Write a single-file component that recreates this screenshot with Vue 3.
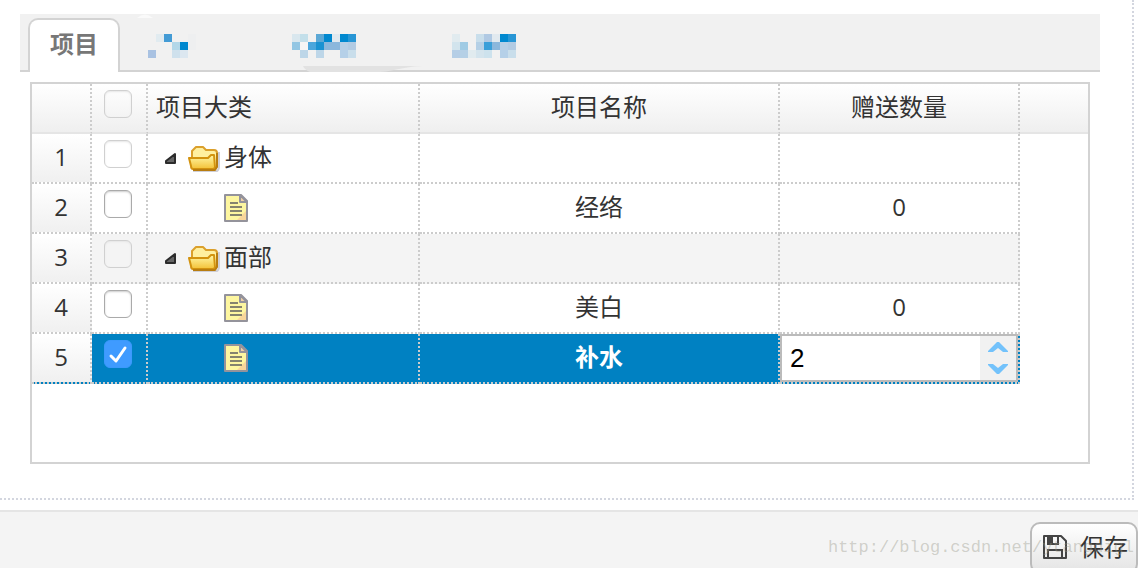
<script setup>
import { ref } from 'vue'

const rows = ref([
  { id: 1, group: '身体', checked: false },
  { id: 2, name: '经络', count: 0, checked: false },
  { id: 3, group: '面部', checked: false, shaded: true },
  { id: 4, name: '美白', count: 0, checked: false },
  { id: 5, name: '补水', count: 2, checked: true, editing: true },
])

// Each mosaic is a list of [column, row, colour] on an 8px grid.
const mosaics = [
  { id: 'a', cols: 6, label: '标签二', cells: [
    [1, 0, '#e1ebf0'], [2, 0, '#439bd5'], [5, 0, '#eeeff0'], [3, 1, '#b3d7e8'], [4, 1, '#0088cf'],
    [5, 1, '#eeeff0'], [0, 2, '#a9c2e2'], [3, 2, '#cfe1ed'], [4, 2, '#dce7f0'],
  ] },
  { id: 'b', cols: 8, label: '标签三', cells: [
    [0, 0, '#d9e7ee'], [1, 0, '#c3dfea'], [3, 0, '#5ca8d5'], [4, 0, '#0088cf'], [5, 0, '#e1e9ef'], [6, 0, '#0088cf'], [7, 0, '#2896d5'],
    [0, 1, '#93c6e3'], [1, 1, '#f5f5f5'], [2, 1, '#4ba6dc'], [3, 1, '#1a92d2'], [4, 1, '#8bb7dc'], [5, 1, '#8bb7dc'], [6, 1, '#b7cfe6'], [7, 1, '#b2cbe3'],
    [1, 2, '#bdd6e8'], [3, 2, '#bdd6e8'], [6, 2, '#b5d0e8'], [7, 2, '#c9deeb'],
  ] },
  { id: 'c', cols: 8, label: '标签四', cells: [
    [0, 0, '#e1ebef'], [3, 0, '#c9deeb'], [4, 0, '#b0c9e3'], [5, 0, '#e1e9ef'], [6, 0, '#0088cf'], [7, 0, '#2896d5'],
    [0, 1, '#d2e4ed'], [1, 1, '#a0cbe4'], [3, 1, '#b5d0e6'], [4, 1, '#3a9fd9'], [5, 1, '#8bb7dc'], [6, 1, '#b7cfe6'], [7, 1, '#b2cbe3'],
    [0, 2, '#b5cee6'], [1, 2, '#b5d0e6'], [2, 2, '#e1ebef'], [3, 2, '#d4e4ed'], [4, 2, '#cde2ed'], [6, 2, '#b5d0e8'], [7, 2, '#c9deeb'],
  ] },
]

function step(row, amount) {
  row.count = Math.max(0, Number(row.count) + amount)
}
</script>

<template>
  <div class="page">
    <main class="panel">
      <nav class="tabs">
        <button class="tab active" type="button">项目</button>
        <button v-for="m in mosaics" :key="m.id" class="tab" :class="'tab-' + m.id" type="button" :aria-label="m.label">
          <svg :width="m.cols * 8" height="24" shape-rendering="crispEdges" aria-hidden="true">
            <rect v-for="(c, i) in m.cells" :key="i" :x="c[0] * 8" :y="c[1] * 8" width="8" height="8" :fill="c[2]" />
          </svg>
        </button>
        <svg class="glint" width="16" height="4" aria-hidden="true">
          <path d="M0 4Q8 -3 16 4Z" fill="#fafafa" />
        </svg>
        <svg class="smudge" width="124" height="6" aria-hidden="true">
          <path d="M0 0H124C98 0 92 6 74 6H7Q2 4 0 0Z" fill="#e2e2e2" />
        </svg>
      </nav>

      <div class="grid">
        <table>
          <colgroup>
            <col class="c-num"><col class="c-check"><col class="c-tree"><col class="c-name"><col class="c-count"><col>
          </colgroup>
          <thead>
            <tr>
              <th></th>
              <th class="check"><input type="checkbox" disabled aria-label="全选"></th>
              <th class="left">项目大类</th>
              <th>项目名称</th>
              <th>赠送数量</th>
              <th class="rest"></th>
            </tr>
          </thead>
          <tbody>
            <tr v-for="row in rows" :key="row.id" :class="{ shaded: row.shaded, selected: row.editing }">
              <td class="num">{{ row.id }}</td>
              <td class="check">
                <label class="box">
                  <input v-model="row.checked" type="checkbox" :disabled="!!row.group" :aria-label="'选择第' + row.id + '行'">
                  <svg v-if="row.checked" class="tick" viewBox="0 0 28 28" aria-hidden="true">
                    <path d="M7 16L12 21L21 8" fill="none" stroke="#fff" stroke-width="3" stroke-linecap="round" stroke-linejoin="round" />
                  </svg>
                </label>
              </td>
              <td>
                <div v-if="row.group" class="node">
                  <svg class="arrow" width="14" height="14" viewBox="0 0 14 14" aria-hidden="true">
                    <path d="M11 3V12H2V10Z" fill="#666" stroke="#2c2c2c" stroke-width="2" stroke-linejoin="round" />
                  </svg>
                  <svg width="32" height="28" viewBox="0 0 32 28" aria-hidden="true">
                    <defs>
                      <linearGradient id="folder" x1="0" y1="0" x2="0" y2="1">
                        <stop offset="0" stop-color="#fff8a8" />
                        <stop offset="1" stop-color="#f3c136" />
                      </linearGradient>
                    </defs>
                    <path d="M5 27H29Q31 26 31 22V8" fill="none" stroke="#cfcfd6" stroke-width="2" />
                    <path d="M4 23V7L8 3H15L18 6H26Q29 6 29 9V22L27 25H6Z" fill="#fff0a0" stroke="#dba02c" stroke-width="2" stroke-linejoin="round" />
                    <path d="M1 14H20L23 11H26L27 23L26 25H5Q3 25 3 22Z" fill="url(#folder)" stroke="#d3930f" stroke-width="2" stroke-linejoin="round" />
                    <path d="M5 26H27L29 23V9" fill="none" stroke="#b87d10" stroke-width="2" stroke-linejoin="round" />
                  </svg>
                  <span>{{ row.group }}</span>
                </div>
                <div v-else class="node leaf">
                  <svg width="26" height="30" viewBox="0 0 26 30" aria-hidden="true">
                    <path d="M2 2H18L24 8V28H2Z" fill="#fdf6a0" stroke="#94939b" stroke-width="2" stroke-linejoin="round" />
                    <path d="M23 18V27H14Z" fill="#f8d69a" />
                    <path d="M17 2V9H24Z" fill="#eed0a8" stroke="#94939b" stroke-width="2" stroke-linejoin="round" />
                    <path d="M7 10H15M7 14H19M7 18H19M7 22H19" stroke="#85836f" stroke-width="2" />
                  </svg>
                </div>
              </td>
              <td class="center">{{ row.name }}</td>
              <td v-if="row.editing" class="editor">
                <div class="spinner">
                  <input v-model="row.count" type="text" inputmode="numeric" aria-label="赠送数量">
                  <div class="steps">
                    <button type="button" aria-label="增加" @click="step(row, 1)">
                      <svg width="22" height="12" viewBox="0 0 22 12" aria-hidden="true"><path d="M1 11V10L10 1H12L21 10V11H16L11 7L6 11Z" fill="#73c2fb" /></svg>
                    </button>
                    <button type="button" aria-label="减少" @click="step(row, -1)">
                      <svg width="22" height="12" viewBox="0 0 22 12" aria-hidden="true"><path d="M1 1V2L10 11H12L21 2V1H16L11 5L6 1Z" fill="#73c2fb" /></svg>
                    </button>
                  </div>
                </div>
              </td>
              <td v-else class="center digit">{{ row.count }}</td>
            </tr>
          </tbody>
        </table>
      </div>
    </main>

    <footer class="footer">
      <button class="save" type="button">
        <svg width="26" height="26" viewBox="0 0 26 26" aria-hidden="true">
          <path d="M2 2H19L24 7V24H2Z" fill="none" stroke="#444" stroke-width="2" stroke-linejoin="round" />
          <path d="M6 2V10H16V2" fill="none" stroke="#444" stroke-width="2" />
          <path d="M6 2H11V10H6Z" fill="#444" />
          <path d="M6 24V16H20V24" fill="none" stroke="#444" stroke-width="2" />
        </svg>
        <span>保存</span>
      </button>
      <span class="watermark">http://blog.csdn.net/ytangdigl</span>
    </footer>
  </div>
</template>

<style>
body {
  overflow: hidden;
  background: #fff;
}
</style>

<style scoped>
.page {
  font-family: "Open Sans", "Noto Sans CJK SC", sans-serif;
  font-size: 24px;
  line-height: 32px;
  color: #333;
}
button, input {
  margin: 0;
  padding: 0;
  border: 0;
  background: none;
  font: inherit;
  color: inherit;
}
svg {
  display: block;
  flex: none;
}
.panel {
  margin: 0 4px 10px 0;
  padding: 14px 32px 34px 20px;
  border: dotted #d3d6df;
  border-width: 0 2px 2px 0;
}
.tabs {
  position: relative;
  display: flex;
  padding: 4px 8px 0;
  background: #f1f1f1;
  box-shadow: inset 0 -2px #d3d3d3;
}
.tab {
  display: flex;
  align-items: center;
  height: 54px;
  padding-top: 2px;
  font-weight: bold;
  color: #777;
}
.tab.active {
  padding: 0 20px 4px;
  border: 2px solid #d3d3d3;
  border-bottom: 0;
  border-radius: 10px 10px 0 0;
  background: #fff;
}
.tab-a { margin-left: 28px; }
.tab-b { margin-left: 96px; }
.tab-c { margin-left: 96px; }
.glint {
  position: absolute;
  left: 117px;
  top: 0;
}
.smudge {
  position: absolute;
  left: 283px;
  bottom: 0;
}
.grid {
  box-sizing: border-box;
  min-height: 382px;
  margin: 10px 10px 0;
  border: 2px solid #d3d3d3;
}
table {
  width: 100%;
  table-layout: fixed;
  border-collapse: separate;
  border-spacing: 0;
}
.c-num { width: 60px; }
.c-check { width: 56px; }
.c-tree { width: 272px; }
.c-name { width: 360px; }
.c-count { width: 240px; }
th, td {
  box-sizing: border-box;
  height: 50px;
  padding: 0;
  border-right: 2px dotted #ccc;
  border-bottom: 2px dotted #ccc;
}
th {
  padding-bottom: 2px;
  border-bottom: 2px solid #e5e5e5;
  background: linear-gradient(#fff, #efefef);
  font-weight: normal;
  text-align: center;
}
th.left {
  padding-left: 8px;
  text-align: left;
}
th.rest { border-right: 0; }
.num {
  padding-bottom: 2px;
  background: linear-gradient(#fff, #f0f0f0) 0 0 / 100% 48px no-repeat border-box;
  text-align: center;
}
.center {
  padding-bottom: 2px;
  text-align: center;
}
.shaded td:not(.num) { background-color: #f4f4f4; }
.selected td { background-color: #0081c2; }
.selected .center {
  font-weight: bold;
  color: #fff;
}
.check {
  padding: 6px 0 0 12px;
  vertical-align: top;
}
.check input {
  display: block;
  appearance: none;
  box-sizing: border-box;
  width: 28px;
  height: 28px;
  border: 1px solid #aaa;
  border-radius: 6px;
  background: #fff;
  box-shadow: inset 0 1px 2px #ccc;
}
.check input:disabled {
  border-color: #d0d0d0;
  background: transparent;
  box-shadow: inset 0 1px 2px #e6e6e6;
}
.check input:checked {
  border-color: #3b99fc;
  background: #3f9bff;
  box-shadow: none;
}
.box {
  position: relative;
  display: block;
  width: 28px;
}
.tick {
  position: absolute;
  inset: 0;
  pointer-events: none;
}
.node {
  display: flex;
  align-items: center;
  padding-left: 16px;
}
.node span {
  margin-left: 4px;
  padding-bottom: 2px;
}
.arrow { margin-right: 10px; }
.leaf { padding-left: 75px; }
.spinner {
  display: flex;
  box-sizing: border-box;
  height: 48px;
  border: 2px solid #bbb;
  background: #fff;
}
.spinner input {
  flex: 1;
  min-width: 0;
  padding-left: 8px;
  font-family: "Liberation Sans", sans-serif;
  font-size: 26px;
  color: #000;
  outline: 0;
}
.steps {
  display: flex;
  flex-direction: column;
  width: 36px;
  background: #f1f1f1;
}
.steps button {
  display: grid;
  flex: 1;
  place-items: center;
}
.footer {
  position: relative;
  display: flex;
  justify-content: flex-end;
  padding-top: 10px;
  border-top: 2px solid #e5e5e5;
  background: #f4f4f4;
}
.save {
  display: flex;
  align-items: center;
  gap: 12px;
  height: 52px;
  padding: 0 8px 2px 10px;
  border: 2px solid #bbb;
  border-radius: 10px;
  background: linear-gradient(#fff, #e4e4e4);
}
.watermark {
  position: absolute;
  top: 20px;
  right: 4px;
  font-family: "Liberation Mono", monospace;
  font-size: 17px;
  color: rgba(150, 150, 135, 0.4);
  pointer-events: none;
}
</style>
